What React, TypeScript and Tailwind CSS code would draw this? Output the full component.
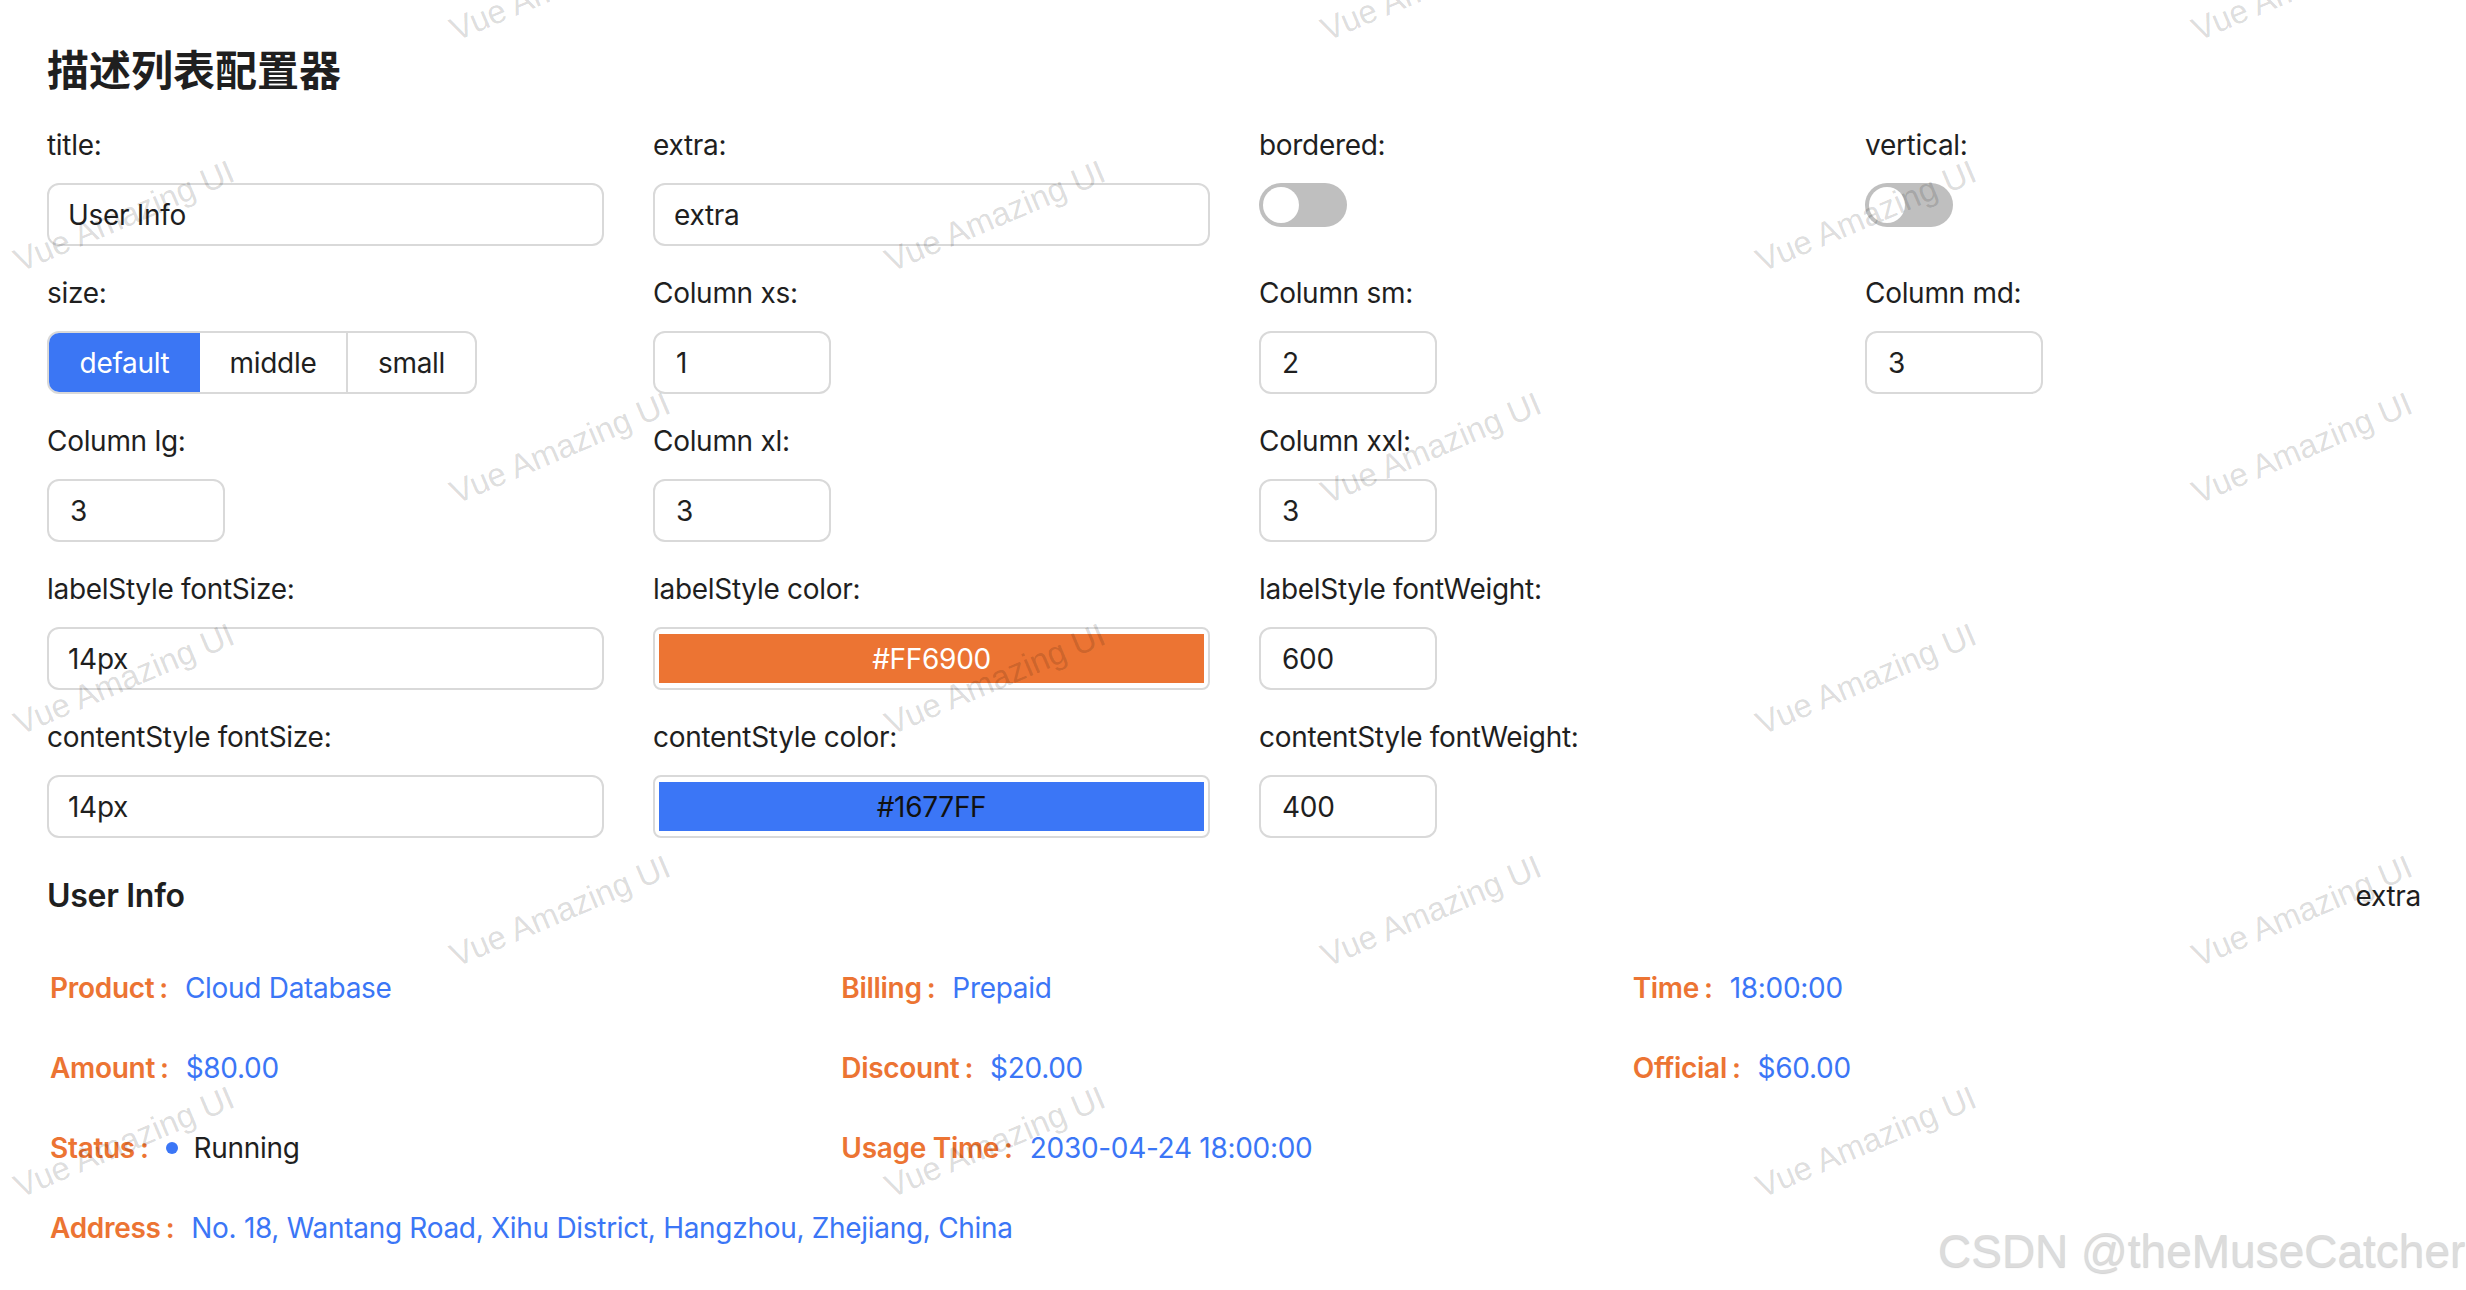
import React from 'react';

type Field =
  | { label: string; kind: 'text'; value: string }
  | { label: string; kind: 'number'; value: string }
  | { label: string; kind: 'switch' }
  | { label: string; kind: 'segmented' }
  | { label: string; kind: 'color'; value: string; swatch: 'orange' | 'blue' }
  | { label: ''; kind: 'empty' };

const fields: Field[] = [
  { label: 'title:', kind: 'text', value: 'User Info' },
  { label: 'extra:', kind: 'text', value: 'extra' },
  { label: 'bordered:', kind: 'switch' },
  { label: 'vertical:', kind: 'switch' },
  { label: 'size:', kind: 'segmented' },
  { label: 'Column xs:', kind: 'number', value: '1' },
  { label: 'Column sm:', kind: 'number', value: '2' },
  { label: 'Column md:', kind: 'number', value: '3' },
  { label: 'Column lg:', kind: 'number', value: '3' },
  { label: 'Column xl:', kind: 'number', value: '3' },
  { label: 'Column xxl:', kind: 'number', value: '3' },
  { label: '', kind: 'empty' },
  { label: 'labelStyle fontSize:', kind: 'text', value: '14px' },
  { label: 'labelStyle color:', kind: 'color', value: '#FF6900', swatch: 'orange' },
  { label: 'labelStyle fontWeight:', kind: 'number', value: '600' },
  { label: '', kind: 'empty' },
  { label: 'contentStyle fontSize:', kind: 'text', value: '14px' },
  { label: 'contentStyle color:', kind: 'color', value: '#1677FF', swatch: 'blue' },
  { label: 'contentStyle fontWeight:', kind: 'number', value: '400' },
];

// watermark anchors (bottom-left of the "V"), staggered grid
const marks: { x: number; y: number }[] = [];
for (let j = -1; j <= 4; j++) {
  for (let i = -1; i <= 5; i++) {
    if ((i + j) % 2 !== 0) continue;
    marks.push({ x: 22 + 435.5 * i, y: 272 + 231.5 * j });
  }
}

const Control: React.FC<{ field: Field }> = ({ field }) => {
  switch (field.kind) {
    case 'text':
      return (
        <div className="flex h-[63px] w-full items-center rounded-[12px] border-2 border-[#d9d9d9] pl-[19px] text-[#1f1f1f]">
          {field.value}
        </div>
      );
    case 'number':
      return (
        <div className="flex h-[63px] w-[178px] items-center rounded-[12px] border-2 border-[#d9d9d9] pl-[21px] text-[#1f1f1f]">
          {field.value}
        </div>
      );
    case 'switch':
      return (
        <div className="flex h-[44px] w-[88px] items-center rounded-full bg-[#bfbfbf] px-[4px]">
          <div className="h-[36px] w-[36px] rounded-full bg-white" />
        </div>
      );
    case 'segmented':
      return (
        <div className="flex h-[63px] w-fit overflow-hidden rounded-[12px] border-2 border-[#d9d9d9]">
          <div className="flex w-[151px] items-center justify-center bg-[#3b76f4] text-white">default</div>
          <div className="flex w-[148px] items-center justify-center border-r-2 border-[#d9d9d9] text-[#1f1f1f]">
            middle
          </div>
          <div className="flex w-[127px] items-center justify-center text-[#1f1f1f]">small</div>
        </div>
      );
    case 'color':
      return (
        <div className="flex h-[63px] w-full rounded-[8px] border-2 border-[#d9d9d9] px-[4px] py-[5px]">
          <div
            className={
              field.swatch === 'orange'
                ? 'flex flex-1 items-center justify-center bg-[#ec7433] text-white'
                : 'flex flex-1 items-center justify-center bg-[#3b76f6] text-[#111]'
            }
          >
            {field.value}
          </div>
        </div>
      );
    default:
      return null;
  }
};

const Item: React.FC<{ label: string; className?: string; children: React.ReactNode }> = ({
  label,
  className,
  children,
}) => (
  <div className={'flex items-center leading-[44px] ' + (className ?? '')}>
    <span className="pl-[3px] font-semibold text-[#ec7433]">{label}</span>
    <span className="ml-[5px] mr-[17px] font-semibold text-[#ec7433]">:</span>
    {children}
  </div>
);

export default function App() {
  return (
    <div className="relative h-[1290px] w-[2466px] overflow-hidden bg-white font-['Inter','Noto_Sans_CJK_SC',sans-serif] text-[28px] tracking-[-0.3px] text-[#1f1f1f]">
      <div className="pl-[47px] pr-[45px] pt-[44px]">
        <h1 className="h-[48px] font-['Noto_Sans_CJK_SC',sans-serif] text-[42px] leading-[48px] font-bold tracking-normal text-[#1f1f1f]">
          描述列表配置器
        </h1>

        <div className="mt-[31px] grid grid-cols-[repeat(4,557px)] gap-x-[49px] gap-y-[25px]">
          {fields.map((f, idx) => (
            <div key={idx} className="flex flex-col">
              <div className="h-[44px] leading-[44px]">{f.label}</div>
              <div className="mt-[16px] h-[63px]">
                <Control field={f} />
              </div>
            </div>
          ))}
        </div>

        <div className="mt-[34px] flex h-[48px] items-center justify-between">
          <div className="text-[32px] leading-[48px] font-semibold">User Info</div>
          <div className="text-[28px] leading-[48px]">extra</div>
        </div>

        <div className="mt-[46px] grid grid-cols-3 gap-y-[36px]">
          <Item label="Product">
            <span className="text-[#3b76f6]">Cloud Database</span>
          </Item>
          <Item label="Billing">
            <span className="text-[#3b76f6]">Prepaid</span>
          </Item>
          <Item label="Time">
            <span className="text-[#3b76f6]">18:00:00</span>
          </Item>
          <Item label="Amount">
            <span className="text-[#3b76f6]">$80.00</span>
          </Item>
          <Item label="Discount">
            <span className="text-[#3b76f6]">$20.00</span>
          </Item>
          <Item label="Official">
            <span className="text-[#3b76f6]">$60.00</span>
          </Item>
          <Item label="Status">
            <span className="mr-[16px] h-[12px] w-[12px] rounded-full bg-[#3b76f6]" />
            <span className="text-[#1f1f1f]">Running</span>
          </Item>
          <Item label="Usage Time" className="col-span-2">
            <span className="text-[#3b76f6]">2030-04-24 18:00:00</span>
          </Item>
          <Item label="Address" className="col-span-3">
            <span className="text-[#3b76f6]">No. 18, Wantang Road, Xihu District, Hangzhou, Zhejiang, China</span>
          </Item>
        </div>
      </div>

      {marks.map((m, idx) => (
        <span
          key={idx}
          className="pointer-events-none absolute origin-bottom-left -rotate-[23deg] whitespace-nowrap font-['Liberation_Sans',sans-serif] text-[33px] leading-[33px] tracking-normal text-[rgba(0,0,0,0.15)]"
          style={{ left: m.x, top: m.y - 28 }}
        >
          Vue Amazing UI
        </span>
      ))}

      <div className="pointer-events-none absolute left-[1938px] top-[1228px] whitespace-nowrap font-['Liberation_Sans',sans-serif] text-[46px] leading-[46px] tracking-normal text-[#dcdcdc] [text-shadow:0_1px_1px_rgba(0,0,0,0.18)]">
        CSDN @theMuseCatcher
      </div>
    </div>
  );
}
